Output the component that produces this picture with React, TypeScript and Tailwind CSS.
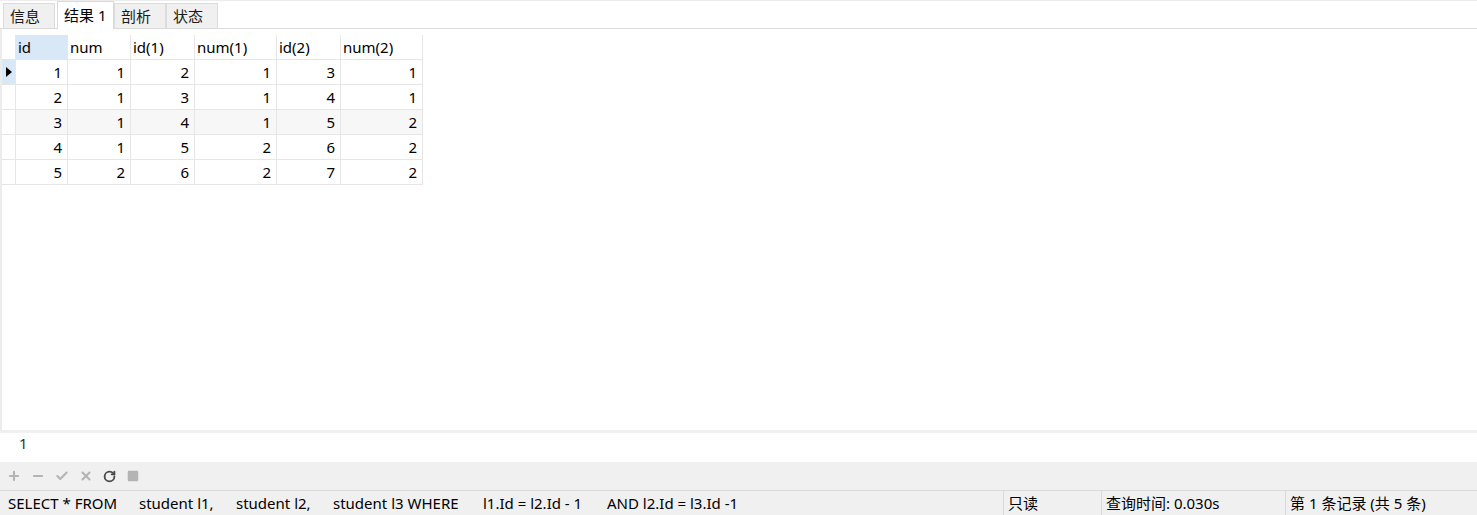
import { Plus, Minus, Check, X, RotateCw, Square } from "lucide-react";

const font = { fontFamily: '"Noto Sans", "Noto Sans CJK SC", sans-serif' };

const columns = [
  { name: "id", width: "w-[52px]" },
  { name: "num", width: "w-[63px]" },
  { name: "id(1)", width: "w-[64px]" },
  { name: "num(1)", width: "w-[82px]" },
  { name: "id(2)", width: "w-[64px]" },
  { name: "num(2)", width: "w-[82px]" },
];

const rows = [
  [1, 1, 2, 1, 3, 1],
  [2, 1, 3, 1, 4, 1],
  [3, 1, 4, 1, 5, 2],
  [4, 1, 5, 2, 6, 2],
  [5, 2, 6, 2, 7, 2],
];

const tabs = [
  { label: "信息", width: "w-[52px]" },
  { label: "结果 1", width: "w-[57px]", active: true },
  { label: "剖析", width: "w-[52px]" },
  { label: "状态", width: "w-[52px]" },
];

// the query is shown with wide gaps between its parts
const sqlParts = [
  { text: "SELECT * FROM", width: "w-[131px]" },
  { text: "student l1,", width: "w-[97px]" },
  { text: "student l2,", width: "w-[97px]" },
  { text: "student l3 WHERE", width: "w-[150px]" },
  { text: "l1.Id = l2.Id - 1", width: "w-[124px]" },
  { text: "AND l2.Id = l3.Id -1", width: "" },
];

function TabBar() {
  return (
    <div className="flex h-[29px] items-end border-t border-b border-t-[#ececec] border-b-[#d9d9d9] bg-white pl-[3px]">
      {tabs.map((t) =>
        t.active ? (
          <div
            key={t.label}
            className={`${t.width} -mb-px flex h-[28px] items-center border border-b-0 border-[#d9d9d9] bg-white pl-[6px] text-[15px] text-black`}
          >
            {t.label}
          </div>
        ) : (
          <div
            key={t.label}
            className={`${t.width} flex h-[25px] items-center border border-b-0 border-[#dcdcdc] bg-[#f0f0f0] pl-[6px] text-[15px] text-[#1a1a1a] first:mr-[2px]`}
          >
            {t.label}
          </div>
        )
      )}
    </div>
  );
}

function Grid() {
  return (
    <div className="h-[401px] border-l-2 border-[#ececec] bg-white pt-[6px]">
      <div className="flex w-fit flex-col">
        <div className="flex h-[25px]">
          <div className="w-[14px] border-r border-b border-[#e6e6e6]" />
          {columns.map((c, i) => (
            <div
              key={c.name}
              className={`${c.width} flex items-center border-r border-b border-[#e6e6e6] pl-[2px] text-[15px] text-black ${
                i === 0 ? "bg-[#d9e8f7]" : "bg-white"
              }`}
            >
              {c.name}
            </div>
          ))}
        </div>
        {rows.map((r, ri) => (
          <div key={ri} className={`flex h-[25px] ${ri === 2 ? "bg-[#f7f7f7]" : "bg-white"}`}>
            <div
              className={`flex w-[14px] items-center justify-center border-r border-b border-[#e6e6e6] ${
                ri === 0 ? "bg-[#d9e8f7]" : "bg-white"
              }`}
            >
              {ri === 0 && (
                <svg viewBox="0 0 6 10" className="h-[10px] w-[6px]" aria-hidden>
                  <path d="M0 0L6 5L0 10Z" fill="#000" />
                </svg>
              )}
            </div>
            {r.map((v, ci) => (
              <div
                key={ci}
                className={`${columns[ci].width} flex items-center justify-end border-r border-b border-[#e6e6e6] pr-[5px] text-[15px] text-black`}
              >
                {v}
              </div>
            ))}
          </div>
        ))}
      </div>
    </div>
  );
}

export default function App() {
  return (
    <div className="flex h-[515px] w-[1477px] flex-col overflow-hidden bg-white" style={font}>
      <TabBar />
      <Grid />
      <div className="h-[3px] bg-[#f0f0f0]" />
      <div className="h-[29px] bg-white pl-[19px] text-[15px] leading-[20px] text-[#333]">1</div>
      <div className="flex h-[28px] items-center gap-[10px] bg-[#f0f0f0] pl-[7px] text-[#b4b4b4]">
        <Plus size={14} strokeWidth={3.6} />
        <Minus size={14} strokeWidth={3.6} />
        <Check size={14} strokeWidth={3.6} />
        <X size={14} strokeWidth={3.6} />
        <RotateCw size={13} strokeWidth={3.4} className="text-[#4a4a4a]" />
        <Square size={14} strokeWidth={0} className="fill-[#b4b4b4]" />
      </div>
      <div className="flex h-[25px] items-center border-t border-[#d9d9d9] bg-[#f0f0f0] text-[15px] text-black">
        <div className="flex w-[1003px] whitespace-nowrap pl-[8px]">
          {sqlParts.map((p) => (
            <span key={p.text} className={`${p.width} shrink-0`}>
              {p.text}
            </span>
          ))}
        </div>
        <div className="flex h-full w-[98px] items-center border-l border-[#d9d9d9] pl-[4px]">只读</div>
        <div className="flex h-full w-[184px] items-center border-l border-[#d9d9d9] pl-[4px]">查询时间: 0.030s</div>
        <div className="flex h-full flex-1 items-center border-l border-[#d9d9d9] pl-[4px]">第 1 条记录 (共 5 条)</div>
      </div>
    </div>
  );
}
